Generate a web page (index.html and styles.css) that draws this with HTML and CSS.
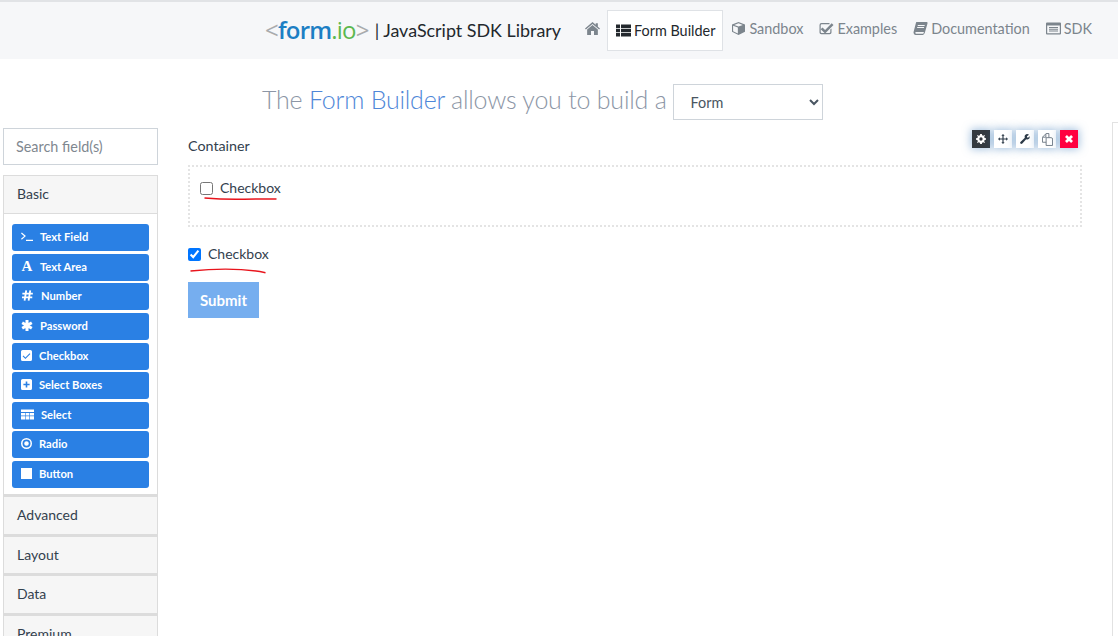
FILE: index.html
```html
<!DOCTYPE html>
<html lang="en">
<head>
    <meta charset="UTF-8">
    <title>JavaScript SDK Library</title>
    <link rel="stylesheet" href="styles.css">
</head>
<body>
    <svg class="sprite" width="0" height="0">
        <symbol id="i-home" viewBox="0 0 14 12"><path d="M7 0 L10 2.6 V1 H12 V4.3 L14 6 L13.2 6.9 L7 1.7 L.8 6.9 L0 6 Z M2 7 L7 2.8 L12 7 V12 H8.4 V8.4 H5.6 V12 H2 Z"/></symbol>
        <symbol id="i-list" viewBox="0 0 15 12"><path d="M0 0 H4 V3.4 H0 Z M5 0 H15 V3.4 H5 Z M0 4.3 H4 V7.7 H0 Z M5 4.3 H15 V7.7 H5 Z M0 8.6 H4 V12 H0 Z M5 8.6 H15 V12 H5 Z"/></symbol>
        <symbol id="i-cube" viewBox="0 0 14 14"><path d="M7 0 L14 2.6 V10.6 L7 14 L0 10.6 V2.6 Z M7 1.4 L2.4 3.1 L7 4.8 L11.6 3.1 Z M1.2 4 V9.9 L6.3 12.4 V5.9 Z"/></symbol>
        <symbol id="i-check" viewBox="0 0 14 13"><path d="M2 1 H10 V2.2 H2.2 Q1.2 2.2 1.2 3.2 V10 Q1.2 11 2.2 11 H9.8 Q10.8 11 10.8 10 V7.6 L12 6.4 V10.4 Q12 12.2 10.2 12.2 H1.8 Q0 12.2 0 10.4 V3 Q0 1 2 1 Z M3 5.4 L5.6 8 L12.2 1.2 L14 3 L5.6 11.4 L1.2 7.2 Z"/></symbol>
        <symbol id="i-book" viewBox="0 0 14 13"><path d="M3 0 H13.4 Q14.4 .4 14 1.6 L11.4 10.6 Q11 12.4 9.4 13 H2 Q0 12.8 0 10.6 Q0 10 .2 9.4 L2.4 1 Q2.6 .2 3 0 Z M4.4 3 L4.1 4 H11 L11.3 3 Z M3.8 5 L3.5 6 H10.4 L10.7 5 Z M2 10 Q1.4 11.6 2.6 11.8 H9.6 Q10.2 11.6 10.4 10 Z"/></symbol>
        <symbol id="i-sdk" viewBox="0 0 15 12"><path d="M1 0 H14 Q15 0 15 1 V11 Q15 12 14 12 H1 Q0 12 0 11 V1 Q0 0 1 0 Z M1.2 3 V10.8 H13.8 V3 Z M3 4.4 H12 V5.4 H3 Z M3 6.2 H12 V7.2 H3 Z M3 8 H12 V9 H3 Z"/></symbol>
        <symbol id="i-cog" viewBox="0 0 12 12"><path fill-rule="evenodd" d="M5 0 H7 L7.3 1.6 L8.8 2.2 L10.2 1.3 L10.7 1.8 L9.8 3.2 L10.4 4.7 L12 5 V7 L10.4 7.3 L9.8 8.8 L10.7 10.2 L10.2 10.7 L8.8 9.8 L7.3 10.4 L7 12 H5 L4.7 10.4 L3.2 9.8 L1.8 10.7 L1.3 10.2 L2.2 8.8 L1.6 7.3 L0 7 V5 L1.6 4.7 L2.2 3.2 L1.3 1.8 L1.8 1.3 L3.2 2.2 L4.7 1.6 Z M6 4 A2 2 0 1 0 6 8 A2 2 0 1 0 6 4 Z"/></symbol>
        <symbol id="i-move" viewBox="0 0 12 12"><path d="M6 0 L8 2.2 H6.7 V5.3 H9.8 V4 L12 6 L9.8 8 V6.7 H6.7 V9.8 H8 L6 12 L4 9.8 H5.3 V6.7 H2.2 V8 L0 6 L2.2 4 V5.3 H5.3 V2.2 H4 Z"/></symbol>
        <symbol id="i-wrench" viewBox="0 0 12 12"><path d="M8.4 0 Q10 0 10.8 .8 L8.4 2.6 V4 L9.6 4.6 L11.6 2.8 Q12 5.6 9.8 6.4 Q8.6 6.8 7.4 6.2 L2.8 11.4 Q1.6 12.4 .6 11.4 Q-.4 10.2 .8 9.2 L5.8 4.6 Q5 2.2 6.6 .8 Q7.4 0 8.4 0 Z"/></symbol>
        <symbol id="i-copy" viewBox="0 0 12 14"><path d="M4.5 5 H10 Q11.5 5 11.5 6.5 V13.5 H4.5 Z M4.5 10 H.5 V4.5 L4.5 .5 H7.5 V5 M4.2 .8 V4.5 H.8"/></symbol>
        <symbol id="i-times" viewBox="0 0 10 10"><path d="M2.4 0 L5 2.6 L7.6 0 L10 2.4 L7.4 5 L10 7.6 L7.6 10 L5 7.4 L2.4 10 L0 7.6 L2.6 5 L0 2.4 Z"/></symbol>
        <symbol id="i-terminal" viewBox="0 0 12 10"><path fill="none" stroke="currentColor" stroke-width="1.2" d="M.4 1.5 L4 4.6 L.4 7.7 M5 8.8 H12"/></symbol>
        <symbol id="i-hash" viewBox="0 0 12 12"><path fill="none" stroke="currentColor" stroke-width="2" d="M4.6 .5 L2.8 11.5 M9 .5 L7.2 11.5 M.4 4 H11.8 M0 8 H11.2"/></symbol>
        <symbol id="i-star" viewBox="0 0 11 11"><path fill="none" stroke="currentColor" stroke-width="3" d="M5.5 0 V11 M.7 2.7 L10.3 8.3 M.7 8.3 L10.3 2.7"/></symbol>
        <symbol id="i-checked" viewBox="0 0 11 11"><path fill-rule="evenodd" d="M1.6 0 H9.4 Q11 0 11 1.6 V9.4 Q11 11 9.4 11 H1.6 Q0 11 0 9.4 V1.6 Q0 0 1.6 0 Z M2.4 5.4 L1.6 6.2 L4.4 9 L9.4 4 L8.6 3.2 L4.4 7.4 Z"/></symbol>
        <symbol id="i-plus" viewBox="0 0 11 11"><path fill-rule="evenodd" d="M1.6 0 H9.4 Q11 0 11 1.6 V9.4 Q11 11 9.4 11 H1.6 Q0 11 0 9.4 V1.6 Q0 0 1.6 0 Z M4.7 2.4 V4.7 H2.4 V6.3 H4.7 V8.6 H6.3 V6.3 H8.6 V4.7 H6.3 V2.4 Z"/></symbol>
        <symbol id="i-table" viewBox="0 0 13 10"><path d="M0 0 H13 V2.6 H0 Z M0 3.4 H4 V6 H0 Z M4.6 3.4 H8.4 V6 H4.6 Z M9 3.4 H13 V6 H9 Z M0 6.8 H4 V10 H0 Z M4.6 6.8 H8.4 V10 H4.6 Z M9 6.8 H13 V10 H9 Z"/></symbol>
        <symbol id="i-radio" viewBox="0 0 11 11"><path fill-rule="evenodd" d="M5.5 0 A5.5 5.5 0 1 0 5.5 11 A5.5 5.5 0 1 0 5.5 0 Z M5.5 1.5 A4 4 0 1 1 5.5 9.5 A4 4 0 1 1 5.5 1.5 Z M5.5 3.2 A2.3 2.3 0 1 0 5.5 7.8 A2.3 2.3 0 1 0 5.5 3.2 Z"/></symbol>
        <symbol id="i-stop" viewBox="0 0 11 11"><path d="M0 0 H11 V11 H0 Z"/></symbol>
    </svg>

    <header class="topbar">
        <a class="brand"><span class="brand-tag">&lt;</span><span class="brand-form">form</span><span class="brand-io">.io</span><span class="brand-tag">&gt;</span></a>
        <span class="brand-title">| JavaScript SDK Library</span>
        <nav class="topnav">
            <a class="nav-link nav-home"><svg class="nav-icon"><use href="#i-home"/></svg></a>
            <a class="nav-link active"><svg class="nav-icon"><use href="#i-list"/></svg>Form Builder</a>
            <a class="nav-link"><svg class="nav-icon"><use href="#i-cube"/></svg>Sandbox</a>
            <a class="nav-link"><svg class="nav-icon"><use href="#i-check"/></svg>Examples</a>
            <a class="nav-link"><svg class="nav-icon"><use href="#i-book"/></svg>Documentation</a>
            <a class="nav-link"><svg class="nav-icon"><use href="#i-sdk"/></svg>SDK</a>
        </nav>
    </header>

    <div class="headline">
        <h3 class="headline-text">The <span class="headline-blue">Form Builder</span> allows you to build a</h3>
        <select class="type-select">
            <option>Form</option>
            <option>Wizard</option>
            <option>PDF</option>
        </select>
    </div>

    <div class="builder">
        <aside class="sidebar">
            <input class="search" type="text" placeholder="Search field(s)">

            <div class="group">
                <div class="group-title">Basic</div>
                <div class="group-body">
                    <a class="field-btn"><svg class="btn-icon"><use href="#i-terminal"/></svg>Text Field</a>
                    <a class="field-btn"><span class="btn-icon btn-font">A</span>Text Area</a>
                    <a class="field-btn"><svg class="btn-icon btn-icon-l"><use href="#i-hash"/></svg>Number</a>
                    <a class="field-btn"><svg class="btn-icon"><use href="#i-star"/></svg>Password</a>
                    <a class="field-btn"><svg class="btn-icon btn-icon-s"><use href="#i-checked"/></svg>Checkbox</a>
                    <a class="field-btn"><svg class="btn-icon btn-icon-s"><use href="#i-plus"/></svg>Select Boxes</a>
                    <a class="field-btn"><svg class="btn-icon btn-icon-l"><use href="#i-table"/></svg>Select</a>
                    <a class="field-btn"><svg class="btn-icon btn-icon-s"><use href="#i-radio"/></svg>Radio</a>
                    <a class="field-btn"><svg class="btn-icon btn-icon-s"><use href="#i-stop"/></svg>Button</a>
                </div>
            </div>
            <div class="group"><div class="group-title">Advanced</div></div>
            <div class="group"><div class="group-title">Layout</div></div>
            <div class="group"><div class="group-title">Data</div></div>
            <div class="group"><div class="group-title">Premium</div></div>
        </aside>

        <main class="canvas">
            <div class="component-tools">
                <span class="tool tool-dark"><svg><use href="#i-cog"/></svg></span>
                <span class="tool"><svg><use href="#i-move"/></svg></span>
                <span class="tool"><svg><use href="#i-wrench"/></svg></span>
                <span class="tool tool-copy"><svg><use href="#i-copy"/></svg></span>
                <span class="tool tool-red"><svg><use href="#i-times"/></svg></span>
            </div>

            <div class="container-label">Container</div>
            <div class="dropzone">
                <label class="check-row"><input type="checkbox"><span>Checkbox</span></label>
                <svg class="ink ink-first" width="73" height="4" viewBox="0 0 73 4"><path d="M.5 1 Q20 2.6 40 2.2 T72.5 2"/></svg>
            </div>
            <label class="check-row check-outer"><input type="checkbox" checked><span>Checkbox</span></label>
            <svg class="ink ink-second" width="76" height="7" viewBox="0 0 76 7"><path d="M.5 4 C20 2 50 .5 75.5 5.7"/></svg>
            <button class="submit" type="button">Submit</button>
        </main>

        <div class="side-panel"></div>
    </div>
</body>
</html>
```

FILE: styles.css
```css
/* Page */
html, body {
    height: 636px;
    overflow: hidden;
}

body {
    margin: 0;
    background-color: #fff;
    color: #33414e;
    font-family: "Lato", "Noto Sans", sans-serif;
    font-size: 14.4px;
}

.sprite {
    position: absolute;
}

/* Top bar */
.topbar {
    display: flex;
    align-items: center;
    box-sizing: border-box;
    height: 59px;
    padding-left: 265px;
    background-color: #f6f7f9;
    border-top: 2px solid #e1e3e6;
}

.brand {
    display: flex;
    align-items: baseline;
    font-family: "Open Sans", sans-serif;
    font-size: 24px;
    letter-spacing: -0.8px;
    margin-right: 6px;
    padding-bottom: 3px;
}

.brand-tag {
    color: #a9abad;
}

.brand-form {
    color: #1d7fc4;
    font-weight: 600;
}

.brand-io {
    color: #5cb84e;
}

.brand-title {
    color: #23282d;
    font-size: 17.9px;
    white-space: nowrap;
    padding-bottom: 2px;
}

.topnav {
    display: flex;
    align-items: center;
    margin-left: 16px;
    color: #7c858d;
}

.nav-link {
    display: flex;
    align-items: center;
    height: 41px;
    padding: 0 8px 4px;
    box-sizing: border-box;
    white-space: nowrap;
}

.nav-link.active {
    padding: 0 7px 1px 8px;
    background-color: #fff;
    border: 1px solid #dfe2e6;
    color: #23282d;
}

.nav-home {
    padding-right: 7px;
}

.nav-icon {
    width: 15px;
    height: 13px;
    margin-right: 3px;
    fill: currentColor;
}

.nav-home .nav-icon {
    margin: 0;
}

/* Headline */
.headline {
    display: flex;
    align-items: center;
    height: 36px;
    margin-top: 25px;
    padding-left: 262px;
}

.headline-text {
    margin: 0 6px 7px 0;
    color: #8c96a6;
    font-size: 25px;
    font-weight: 300;
    letter-spacing: -0.22px;
    white-space: nowrap;
}

.headline-blue {
    color: #4f87d8;
}

.type-select {
    width: 150px;
    height: 36px;
    padding: 0 13px;
    background-color: #fff;
    border: 1px solid #ced4da;
    border-radius: 0;
    color: #4a5662;
    font-family: inherit;
    font-size: 14.4px;
}

/* Builder area */
.builder {
    display: flex;
    align-items: flex-start;
    margin-top: 8px;
    padding-left: 3px;
}

.sidebar {
    flex: 0 0 155px;
    width: 155px;
}

.search {
    display: block;
    box-sizing: border-box;
    width: 100%;
    height: 37px;
    margin-bottom: 10px;
    padding: 0 12px;
    border: 1px solid #ced4da;
    font-family: inherit;
    font-size: 14.4px;
}

.search::placeholder {
    color: #7f8890;
}

.group {
    box-sizing: border-box;
    border: 1px solid #dcdcdc;
    border-bottom-width: 2px;
    border-top-width: 1px;
}

.group-title {
    box-sizing: border-box;
    height: 36.5px;
    padding-left: 13px;
    line-height: 35px;
    background-color: #f6f6f6;
    color: #33414e;
    font-size: 14px;
}

.group-body {
    display: flex;
    flex-direction: column;
    gap: 2.6px;
    height: 281.5px;
    box-sizing: border-box;
    padding: 10.7px 8px 0;
    background-color: #fff;
    border-top: 1px solid #dcdcdc;
}

.field-btn {
    display: flex;
    align-items: center;
    box-sizing: border-box;
    height: 27px;
    padding: 0 0 2px 9px;
    background-color: #2a80e4;
    border-radius: 3px;
    color: #fff;
    font-size: 11.2px;
    font-weight: 700;
    white-space: nowrap;
}

.btn-icon {
    width: 12px;
    height: 11px;
    margin-right: 7px;
    fill: currentColor;
    flex: none;
}

.btn-icon-s {
    width: 11px;
}

.btn-icon-l {
    width: 13px;
}

.btn-font {
    font-family: "Liberation Serif", serif;
    font-size: 15px;
    font-weight: 700;
    line-height: 11px;
    text-align: center;
}

/* Form canvas */
.canvas {
    position: relative;
    flex: 0 0 894px;
    width: 894px;
    margin-left: 30px;
}

.container-label {
    box-sizing: border-box;
    height: 37px;
    padding-top: 8px;
    line-height: 20px;
    font-size: 14.3px;
}

.dropzone {
    position: relative;
    box-sizing: border-box;
    height: 62px;
    padding: 11px 10px;
    border: 2px dotted #e4e4e4;
}

.check-row {
    display: flex;
    align-items: center;
    height: 20px;
    font-size: 14px;
}

.check-row input {
    width: 13px;
    height: 13px;
    margin: 0 7px 0 0;
}

.check-row span {
    padding-bottom: 1px;
}

.check-outer {
    margin-top: 17px;
}

.ink {
    position: absolute;
    fill: none;
    stroke: #e8141c;
    stroke-width: 1.4;
}

.ink-first {
    left: 14px;
    top: 30px;
}

.ink-second {
    left: 2px;
    top: 139px;
}

.submit {
    display: block;
    width: 71px;
    height: 36px;
    margin-top: 18px;
    padding: 0 0 1px;
    background-color: #76aeef;
    border: 0;
    color: #fff;
    font-family: inherit;
    font-size: 15px;
    font-weight: 700;
}

/* Hover tools above the component */
.component-tools {
    position: absolute;
    top: 2px;
    right: 4px;
    display: flex;
    gap: 4px;
}

.tool {
    display: flex;
    align-items: center;
    justify-content: center;
    width: 18px;
    height: 18px;
    background-color: #fff;
    fill: #2c3a48;
    box-shadow: 0 0 9px 1px rgba(70, 130, 190, 0.5);
}

.tool svg {
    width: 10px;
    height: 10px;
}

.tool-copy svg {
    width: 11px;
    height: 13px;
    stroke: #6b7682;
    stroke-width: 1;
    fill: none;
}

.tool-dark {
    background-color: #343a40;
    fill: #fff;
}

.tool-red {
    background-color: #ff0040;
    fill: #fff;
}

.tool-red svg {
    width: 8px;
    height: 8px;
}

/* Edge of the panel on the right */
.side-panel {
    position: absolute;
    top: 122px;
    left: 1112px;
    width: 6px;
    height: 514px;
    border-top: 1px solid #e2e2e2;
    border-left: 1px solid #e2e2e2;
    box-sizing: border-box;
}
```
